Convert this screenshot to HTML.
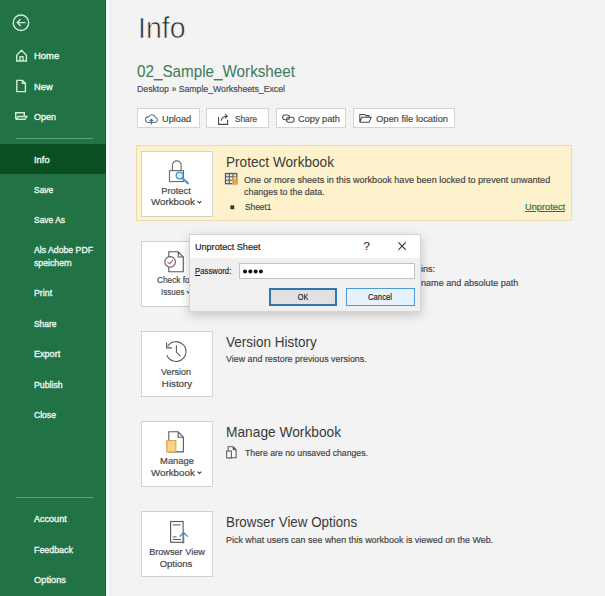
<!DOCTYPE html>
<html><head><meta charset="utf-8">
<style>
html,body{margin:0;padding:0;}
body{width:605px;height:596px;overflow:hidden;position:relative;background:#f3f3f3;font-family:"Liberation Sans",sans-serif;}
.t{position:absolute;white-space:nowrap;-webkit-text-stroke:0.18px currentColor;}
.a{position:absolute;box-sizing:border-box;}
#sb{left:0;top:0;width:106px;height:596px;background:#217346;}
#sel{left:0;top:144px;width:106px;height:30px;background:#0a4f22;}
.sep{left:16px;width:77px;height:1px;background:#5a9f78;}
#edge{left:106px;top:0;width:3px;height:596px;background:#fbfffb;}
#edge2{left:109px;top:0;width:3px;height:596px;background:#efeff3;}
#edge0{left:105px;top:0;width:1px;height:596px;background:#1c643a;}
.btn{background:#ffffff;border:1px solid #d4d4d4;}
.big{background:#ffffff;border:1px solid #d2d2d2;}
#panel{left:136px;top:145px;width:436px;height:76px;background:#fdf2cc;border:1px solid #eadcae;}
#dlg{left:189px;top:234px;width:232px;height:78px;background:#f0f0f0;border:1px solid #d4d4d4;box-shadow:0 3px 10px rgba(0,0,0,0.2);z-index:10;}
#dlgtitle{left:0;top:0;width:230px;height:23px;background:#ffffff;}
#dlgwrap{position:absolute;left:0;top:0;width:605px;height:596px;z-index:11;}
</style></head><body>
<div class="a" id="sb"></div>
<div class="a" id="edge0"></div>
<div class="a" id="sel"></div>
<div class="a sep" style="top:138px"></div>
<div class="a sep" style="top:497px"></div>
<div class="a" id="edge"></div><div class="a" id="edge2"></div>

<div class="a btn" style="left:137px;top:108px;width:63px;height:20px"></div>
<div class="a btn" style="left:206px;top:108px;width:63px;height:20px"></div>
<div class="a btn" style="left:276px;top:108px;width:70px;height:20px"></div>
<div class="a btn" style="left:353px;top:108px;width:102px;height:20px"></div>

<div class="a" id="panel"></div>
<div class="a big" style="left:141px;top:151px;width:72px;height:66px"></div>
<div class="a big" style="left:141px;top:241px;width:72px;height:66px"></div>
<div class="a big" style="left:141px;top:331px;width:72px;height:66px"></div>
<div class="a big" style="left:141px;top:421px;width:72px;height:66px"></div>
<div class="a big" style="left:141px;top:511px;width:72px;height:66px"></div>


<svg class="a" style="left:0;top:0;z-index:2" width="605" height="596" viewBox="0 0 605 596" fill="none" stroke-linejoin="miter">
 <!-- sidebar icons -->
 <g stroke="#cdebd7" stroke-width="1.4">
  <circle cx="20.95" cy="22.75" r="7.75"/>
  <path d="M17.2 22.6 H25.6 M20.6 19.2 L17.2 22.6 L20.6 26"/>
  <path d="M16.7 61 V55.2 L21.5 50.3 L26.4 55.2 V61 Z M20 61 V56.6 H23 V61"/>
  <path d="M16.8 80.4 H22.6 L25.4 83.2 V91.6 H16.8 Z M22.4 80.4 V83.4 H25.4"/>
  <path d="M15.7 119.3 V112.7 H24.3 V116.4 M15.7 119.3 H25 L26.9 116.5 H18.2 L15.7 119.3"/>
 </g>
 <!-- toolbar icons -->
 <path d="M147.6 122.4 H155.2 A2.6 2.6 0 0 0 155.4 117.3 A3.6 3.6 0 0 0 148.6 116.9 A2.8 2.8 0 0 0 147.6 122.4 Z" stroke="#6f6f6f" stroke-width="1.05" fill="#ffffff"/>
 <path d="M151.4 124.4 V119.4 M149.4 121.3 L151.4 119.2 L153.4 121.3" stroke="#2a79b8" stroke-width="1.1"/>
 <path d="M218.6 117.3 V124.4 H227.6 V119.8" stroke="#474747" stroke-width="1.1"/>
 <path d="M221.2 120.6 Q222 116.2 227 116.3 M225 114.2 L227.3 116.3 L225 118.4" stroke="#474747" stroke-width="1.1"/>
 <rect x="282.6" y="114.9" width="7" height="4.8" rx="2.4" stroke="#505050" stroke-width="1.05"/>
 <rect x="286.4" y="117.2" width="7.8" height="5" rx="2.5" stroke="#505050" stroke-width="1.05"/>
 <path d="M359.8 122.2 V114.4 H364.6 L366 115.6 H369 V117.3 M359.8 122.2 H369.2 L371.2 117.3 H361.8 L359.8 122.2" stroke="#4a4a4a" stroke-width="1.05"/>
 <!-- protect workbook lock -->
 <path d="M172.5 170.3 V165.2 A4.3 4.3 0 0 1 181.1 165.2 V170.3" stroke="#6a6a6a" stroke-width="1.1"/>
 <rect x="169.5" y="170.6" width="14" height="11" stroke="#6a6a6a" stroke-width="1.1" fill="#ffffff"/>
 <circle cx="179.6" cy="175.5" r="3.4" stroke="#4596c4" stroke-width="1.3" fill="#e2f1f9"/>
 <path d="M182.1 178.1 L187.8 183.2" stroke="#4f9ecb" stroke-width="2.3" stroke-linecap="round"/>
 <!-- check for issues -->
 <path d="M168.8 251.8 H178.2 L183.3 257 V271.8 H168.8 Z M178.2 251.8 V257 H183.3" stroke="#5a5a5a" stroke-width="1.1" fill="#ffffff"/>
 <circle cx="170.1" cy="261.9" r="5.3" stroke="#5a5a5a" stroke-width="1.1" fill="#ffffff"/>
 <path d="M167.6 261.8 L169.6 263.8 L173 259.8" stroke="#c2476a" stroke-width="1.1"/>
 <!-- version history clock -->
 <path d="M166.9 355.2 A9.9 9.9 0 1 0 167.6 346.4" stroke="#5a5a5a" stroke-width="1.1"/>
 <path d="M166.6 342.4 V347.9 H171.9" stroke="#5a5a5a" stroke-width="1.1"/>
 <path d="M176.4 345.2 V352.1 L180.6 356.4" stroke="#5a5a5a" stroke-width="1.1"/>
 <!-- manage workbook -->
 <path d="M168.8 431.8 H178.2 L183.4 437.2 V451.9 H168.8 Z M178.2 431.8 V437.2 H183.4" stroke="#5a5a5a" stroke-width="1.1" fill="#ffffff"/>
 <rect x="166.8" y="440.6" width="9" height="11.4" stroke="#e0a43c" stroke-width="1.1" fill="#f7d28a"/>
 <!-- browser view -->
 <rect x="170.6" y="521.5" width="12.5" height="20.8" stroke="#555" stroke-width="1.1" fill="#ffffff"/>
 <path d="M172.8 524.9 H180.6 M172.8 536.9 H176.6 M172.8 539.4 H181" stroke="#555" stroke-width="1"/>
 <path d="M183.6 543.5 V532.8 M179.6 536.6 L183.6 532.6 L187.8 536.6" stroke="#3a8cbf" stroke-width="1.3"/>
 <!-- small panel icons -->
 <rect x="225.5" y="173.5" width="11.2" height="10.2" stroke="#5a5a5a" stroke-width="1.3" fill="#e8e8e8"/>
 <path d="M225.4 176.8 H236.8 M229.3 173.4 V183.7 M233 173.4 V183.7 M225.4 180.2 H236.8" stroke="#5a5a5a" stroke-width="1.1"/>
 <rect x="232" y="179.2" width="5.6" height="5.2" fill="#e8a53a"/>
 <path d="M233.2 179.4 V177.8 A1.6 1.6 0 0 1 236.4 177.8 V179.4" stroke="#e8a53a" stroke-width="0.9"/>
 <path d="M228.2 446.8 H233.2 L236.1 449.7 V457.8 H228.2 Z M233.2 446.8 V449.7 H236.1" stroke="#555" stroke-width="1.05" fill="#ffffff"/>
 <rect x="226.7" y="451" width="4.6" height="6.9" stroke="#555" stroke-width="1.05" fill="#ffffff"/>
 <!-- bullet -->
 <rect x="230.4" y="205.4" width="3.8" height="3.8" fill="#333"/>
 <!-- chevrons -->
 <path d="M197.5 201.2 L199.4 203 L201.3 201.2" stroke="#444" stroke-width="1.15"/>
 <path d="M197.5 471.7 L199.4 473.5 L201.3 471.7" stroke="#444" stroke-width="1.15"/>
 <path d="M186.8 291.2 L188.7 293 L190.6 291.2" stroke="#444" stroke-width="1.15"/>
</svg>

<div class="t" id="t0" style="left:33.5px;top:51.00px;font-size:9.80px;line-height:9.80px;color:#e8f4ec;font-weight:normal;transform:scaleX(0.9640);transform-origin:0 0;-webkit-text-stroke:0.4px currentColor;">Home</div>
<div class="t" id="t1" style="left:33.5px;top:81.60px;font-size:9.80px;line-height:9.80px;color:#e8f4ec;font-weight:normal;transform:scaleX(0.9485);transform-origin:0 0;-webkit-text-stroke:0.4px currentColor;">New</div>
<div class="t" id="t2" style="left:33.5px;top:112.10px;font-size:9.80px;line-height:9.80px;color:#e8f4ec;font-weight:normal;transform:scaleX(0.9137);transform-origin:0 0;-webkit-text-stroke:0.4px currentColor;">Open</div>
<div class="t" id="t3" style="left:33.5px;top:154.50px;font-size:9.80px;line-height:9.80px;color:#e8f4ec;font-weight:normal;transform:scaleX(0.9545);transform-origin:0 0;-webkit-text-stroke:0.4px currentColor;">Info</div>
<div class="t" id="t4" style="left:33.5px;top:185.00px;font-size:9.80px;line-height:9.80px;color:#e8f4ec;font-weight:normal;transform:scaleX(0.8638);transform-origin:0 0;-webkit-text-stroke:0.4px currentColor;">Save</div>
<div class="t" id="t5" style="left:33.5px;top:215.40px;font-size:9.80px;line-height:9.80px;color:#e8f4ec;font-weight:normal;transform:scaleX(0.8622);transform-origin:0 0;-webkit-text-stroke:0.4px currentColor;">Save As</div>
<div class="t" id="t6" style="left:33.5px;top:245.40px;font-size:9.80px;line-height:9.80px;color:#e8f4ec;font-weight:normal;transform:scaleX(0.8881);transform-origin:0 0;-webkit-text-stroke:0.4px currentColor;">Als Adobe PDF</div>
<div class="t" id="t7" style="left:33.5px;top:257.50px;font-size:9.80px;line-height:9.80px;color:#e8f4ec;font-weight:normal;transform:scaleX(0.8874);transform-origin:0 0;-webkit-text-stroke:0.4px currentColor;">speichern</div>
<div class="t" id="t8" style="left:33.5px;top:288.30px;font-size:9.80px;line-height:9.80px;color:#e8f4ec;font-weight:normal;transform:scaleX(0.8980);transform-origin:0 0;-webkit-text-stroke:0.4px currentColor;">Print</div>
<div class="t" id="t9" style="left:33.5px;top:318.80px;font-size:9.80px;line-height:9.80px;color:#e8f4ec;font-weight:normal;transform:scaleX(0.8564);transform-origin:0 0;-webkit-text-stroke:0.4px currentColor;">Share</div>
<div class="t" id="t10" style="left:33.5px;top:349.30px;font-size:9.80px;line-height:9.80px;color:#e8f4ec;font-weight:normal;transform:scaleX(0.9249);transform-origin:0 0;-webkit-text-stroke:0.4px currentColor;">Export</div>
<div class="t" id="t11" style="left:33.5px;top:379.60px;font-size:9.80px;line-height:9.80px;color:#e8f4ec;font-weight:normal;transform:scaleX(0.8930);transform-origin:0 0;-webkit-text-stroke:0.4px currentColor;">Publish</div>
<div class="t" id="t12" style="left:33.5px;top:410.10px;font-size:9.80px;line-height:9.80px;color:#e8f4ec;font-weight:normal;transform:scaleX(0.8738);transform-origin:0 0;-webkit-text-stroke:0.4px currentColor;">Close</div>
<div class="t" id="t13" style="left:33.5px;top:514.20px;font-size:9.80px;line-height:9.80px;color:#e8f4ec;font-weight:normal;transform:scaleX(0.9236);transform-origin:0 0;-webkit-text-stroke:0.4px currentColor;">Account</div>
<div class="t" id="t14" style="left:33.5px;top:544.70px;font-size:9.80px;line-height:9.80px;color:#e8f4ec;font-weight:normal;transform:scaleX(0.9017);transform-origin:0 0;-webkit-text-stroke:0.4px currentColor;">Feedback</div>
<div class="t" id="t15" style="left:33.5px;top:575.10px;font-size:9.80px;line-height:9.80px;color:#e8f4ec;font-weight:normal;transform:scaleX(0.9477);transform-origin:0 0;-webkit-text-stroke:0.4px currentColor;">Options</div>
<div class="t" id="t16" style="left:137.8px;top:13.34px;font-size:30.20px;line-height:30.20px;color:#2a2a2a;font-weight:normal;transform:scaleX(0.9452);transform-origin:0 0;-webkit-text-stroke:0.7px #f3f3f3;">Info</div>
<div class="t" id="t17" style="left:137.0px;top:62.61px;font-size:17.00px;line-height:17.00px;color:#3e7d60;font-weight:normal;transform:scaleX(0.8957);transform-origin:0 0;-webkit-text-stroke:0.05px currentColor;">02_Sample_Worksheet</div>
<div class="t" id="t18" style="left:137.0px;top:84.39px;font-size:9.70px;line-height:9.70px;color:#4a4a4a;font-weight:normal;transform:scaleX(0.8992);transform-origin:0 0;">Desktop » Sample_Worksheets_Excel</div>
<div class="t" id="t19" style="left:161.9px;top:113.67px;font-size:9.60px;line-height:9.60px;color:#4a4a4a;font-weight:normal;transform:scaleX(0.9603);transform-origin:0 0;">Upload</div>
<div class="t" id="t20" style="left:234.5px;top:114.07px;font-size:9.60px;line-height:9.60px;color:#4a4a4a;font-weight:normal;transform:scaleX(0.8591);transform-origin:0 0;">Share</div>
<div class="t" id="t21" style="left:298.2px;top:113.77px;font-size:9.60px;line-height:9.60px;color:#4a4a4a;font-weight:normal;transform:scaleX(0.9603);transform-origin:0 0;">Copy path</div>
<div class="t" id="t22" style="left:376.0px;top:113.67px;font-size:9.60px;line-height:9.60px;color:#4a4a4a;font-weight:normal;transform:scaleX(0.9711);transform-origin:0 0;">Open file location</div>
<div class="t" id="t23" style="left:225.6px;top:154.68px;font-size:14.20px;line-height:14.20px;color:#3a3a3a;font-weight:normal;transform:scaleX(0.9600);transform-origin:0 0;-webkit-text-stroke:0.02px currentColor;">Protect Workbook</div>
<div class="t" id="t24" style="left:244.2px;top:175.29px;font-size:9.70px;line-height:9.70px;color:#444444;font-weight:normal;transform:scaleX(0.9367);transform-origin:0 0;">One or more sheets in this workbook have been locked to prevent unwanted</div>
<div class="t" id="t25" style="left:244.2px;top:186.59px;font-size:9.70px;line-height:9.70px;color:#444444;font-weight:normal;transform:scaleX(0.9180);transform-origin:0 0;">changes to the data.</div>
<div class="t" id="t26" style="left:244.8px;top:202.49px;font-size:9.70px;line-height:9.70px;color:#444444;font-weight:normal;transform:scaleX(0.8594);transform-origin:0 0;">Sheet1</div>
<div class="t" id="t27" style="left:524.5px;top:201.79px;font-size:9.70px;line-height:9.70px;color:#2f6e45;font-weight:normal;transform:scaleX(0.9548);transform-origin:0 0;text-decoration:underline;">Unprotect</div>
<div class="t" id="t28" style="left:421.0px;top:264.39px;font-size:9.70px;line-height:9.70px;color:#444444;font-weight:normal;transform:scaleX(0.9351);transform-origin:0 0;">ins:</div>
<div class="t" id="t29" style="left:421.0px;top:278.09px;font-size:9.70px;line-height:9.70px;color:#444444;font-weight:normal;transform:scaleX(0.9370);transform-origin:0 0;">name and absolute path</div>
<div class="t" id="t30" style="left:225.6px;top:334.68px;font-size:14.20px;line-height:14.20px;color:#3a3a3a;font-weight:normal;transform:scaleX(0.9507);transform-origin:0 0;-webkit-text-stroke:0.02px currentColor;">Version History</div>
<div class="t" id="t31" style="left:225.6px;top:353.79px;font-size:9.70px;line-height:9.70px;color:#444444;font-weight:normal;transform:scaleX(0.9178);transform-origin:0 0;">View and restore previous versions.</div>
<div class="t" id="t32" style="left:225.6px;top:424.68px;font-size:14.20px;line-height:14.20px;color:#3a3a3a;font-weight:normal;transform:scaleX(0.9686);transform-origin:0 0;-webkit-text-stroke:0.02px currentColor;">Manage Workbook</div>
<div class="t" id="t33" style="left:245.4px;top:447.79px;font-size:9.70px;line-height:9.70px;color:#444444;font-weight:normal;transform:scaleX(0.8991);transform-origin:0 0;">There are no unsaved changes.</div>
<div class="t" id="t34" style="left:225.6px;top:515.18px;font-size:14.20px;line-height:14.20px;color:#3a3a3a;font-weight:normal;transform:scaleX(0.9418);transform-origin:0 0;-webkit-text-stroke:0.02px currentColor;">Browser View Options</div>
<div class="t" id="t35" style="left:225.6px;top:535.39px;font-size:9.70px;line-height:9.70px;color:#444444;font-weight:normal;transform:scaleX(0.9229);transform-origin:0 0;">Pick what users can see when this workbook is viewed on the Web.</div>
<div class="t" id="t36" style="left:176.4px;top:185.57px;font-size:9.60px;line-height:9.60px;color:#444444;font-weight:normal;transform:translateX(-50%) scaleX(0.9702);transform-origin:50% 0;">Protect</div>
<div class="t" id="t37" style="left:150.7px;top:197.17px;font-size:9.60px;line-height:9.60px;color:#444444;font-weight:normal;transform:scaleX(1.0182);transform-origin:0 0;">Workbook</div>
<div class="t" id="t38" style="left:157.0px;top:275.17px;font-size:9.60px;line-height:9.60px;color:#444444;font-weight:normal;transform:scaleX(0.8645);transform-origin:0 0;">Check for</div>
<div class="t" id="t39" style="left:160.7px;top:286.77px;font-size:9.60px;line-height:9.60px;color:#444444;font-weight:normal;transform:scaleX(0.8365);transform-origin:0 0;">Issues</div>
<div class="t" id="t40" style="left:176.4px;top:366.87px;font-size:9.60px;line-height:9.60px;color:#444444;font-weight:normal;transform:translateX(-50%) scaleX(0.9375);transform-origin:50% 0;">Version</div>
<div class="t" id="t41" style="left:176.8px;top:378.87px;font-size:9.60px;line-height:9.60px;color:#444444;font-weight:normal;transform:translateX(-50%) scaleX(1.0148);transform-origin:50% 0;">History</div>
<div class="t" id="t42" style="left:176.7px;top:456.07px;font-size:9.60px;line-height:9.60px;color:#444444;font-weight:normal;transform:translateX(-50%) scaleX(0.9749);transform-origin:50% 0;">Manage</div>
<div class="t" id="t43" style="left:150.7px;top:467.67px;font-size:9.60px;line-height:9.60px;color:#444444;font-weight:normal;transform:scaleX(1.0182);transform-origin:0 0;">Workbook</div>
<div class="t" id="t44" style="left:176.8px;top:546.87px;font-size:9.60px;line-height:9.60px;color:#444444;font-weight:normal;transform:translateX(-50%) scaleX(0.9524);transform-origin:50% 0;">Browser View</div>
<div class="t" id="t45" style="left:176.4px;top:558.87px;font-size:9.60px;line-height:9.60px;color:#444444;font-weight:normal;transform:translateX(-50%) scaleX(0.9886);transform-origin:50% 0;">Options</div>


<div class="a" id="dlg"><div class="a" id="dlgtitle"></div>
  <div class="a" style="left:49px;top:28px;width:176px;height:16px;background:#fff;border:1px solid #c4c4c4"></div>
  <div class="a" style="left:79px;top:53px;width:68px;height:18px;background:#e1e1e1;border:2px solid #2f74b4"></div>
  <div class="a" style="left:156px;top:53px;width:69px;height:18px;background:#e5f1fb;border:1px solid #4f9ad6"></div>
</div>
<div id="dlgwrap">
<div class="t" id="t46" style="left:194.9px;top:241.50px;font-size:9.80px;line-height:9.80px;color:#222222;font-weight:normal;transform:scaleX(0.9250);transform-origin:0 0;">Unprotect Sheet</div>
<div class="t" id="t47" style="left:194.9px;top:265.90px;font-size:9.80px;line-height:9.80px;color:#222222;font-weight:normal;transform:scaleX(0.7934);transform-origin:0 0;"><u>P</u>assword:</div>
<div class="t" id="t48" style="left:366.7px;top:240.77px;font-size:11.50px;line-height:11.50px;color:#333333;font-weight:normal;transform:translateX(-50%);">?</div>
<div class="t" id="t49" style="left:303.1px;top:292.17px;font-size:9.60px;line-height:9.60px;color:#222222;font-weight:normal;transform:translateX(-50%) scaleX(0.7495);transform-origin:50% 0;">OK</div>
<div class="t" id="t50" style="left:380.0px;top:292.17px;font-size:9.60px;line-height:9.60px;color:#222222;font-weight:normal;transform:translateX(-50%) scaleX(0.8033);transform-origin:50% 0;">Cancel</div>

<svg class="a" style="left:0;top:0" width="605" height="596" viewBox="0 0 605 596" fill="none">
 <path d="M398.4 242.4 L405.8 249.8 M405.8 242.4 L398.4 249.8" stroke="#333" stroke-width="1.05"/>
 <circle cx="245" cy="271.6" r="2" fill="#111"/>
 <circle cx="250.3" cy="271.6" r="2" fill="#111"/>
 <circle cx="255.6" cy="271.6" r="2" fill="#111"/>
 <circle cx="260.9" cy="271.6" r="2" fill="#111"/>
</svg>

</div>
</body></html>
